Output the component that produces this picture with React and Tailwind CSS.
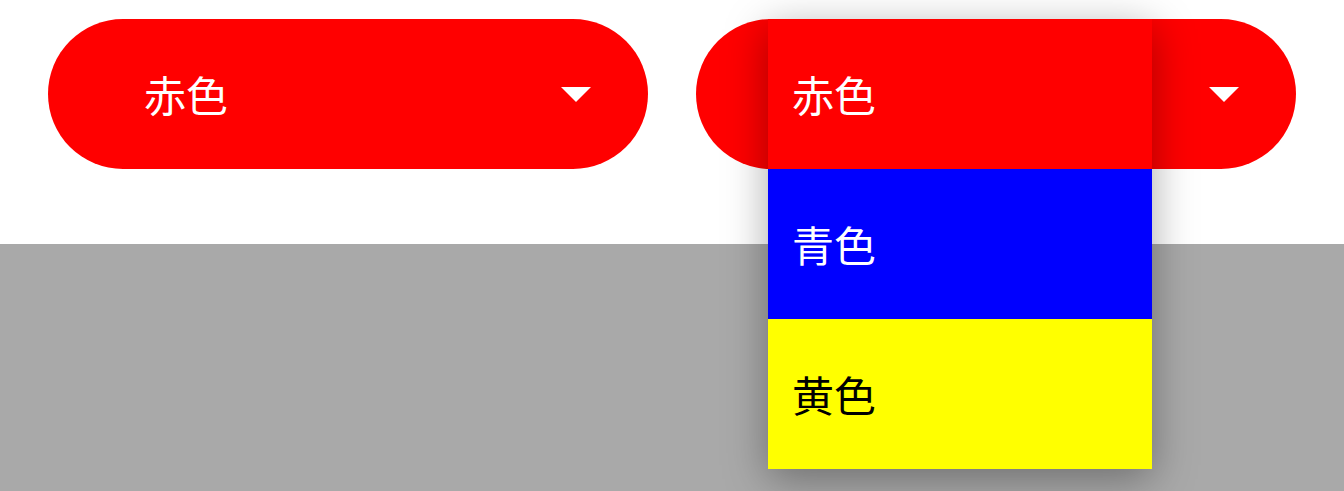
import React from 'react';

const Caret = () => (
    <svg width="30" height="15" viewBox="0 0 30 15" className="block">
        <path d="M0 0 L30 0 L15 15 Z" fill="#ffffff" />
    </svg>
);

const SelectButton = ({ label }) => (
    <div className="flex h-[150px] w-[600px] items-center justify-between rounded-full bg-[#ff0000] pl-[96px] pr-[57px] text-white">
        <span className="text-[42px] leading-none">{label}</span>
        <Caret />
    </div>
);

const options = [
    { label: '赤色', bg: 'bg-[#ff0000]', text: 'text-white' },
    { label: '青色', bg: 'bg-[#0000ff]', text: 'text-white' },
    { label: '黄色', bg: 'bg-[#ffff00]', text: 'text-black' },
];

export default function App() {
    return (
        <div className="h-[491px] w-full overflow-hidden bg-[#a9a9a9]" style={{ fontFamily: '"Noto Sans CJK JP", "Noto Sans", sans-serif' }}>
            <div className="h-[244px] bg-white">
                <div className="flex gap-[48px] pl-[48px] pt-[19px]">
                    <SelectButton label="赤色" />
                    <div className="relative">
                        <SelectButton label="赤色" />
                        {/* open menu */}
                        <div className="absolute left-[72px] top-0 z-10 w-[384px] shadow-[0_10px_40px_rgba(0,0,0,0.35)]">
                            {options.map((o) => (
                                <div key={o.label} className={`flex h-[150px] items-center pl-[24px] ${o.bg} ${o.text}`}>
                                    <span className="text-[42px] leading-none">{o.label}</span>
                                </div>
                            ))}
                        </div>
                    </div>
                </div>
            </div>
        </div>
    );
}
